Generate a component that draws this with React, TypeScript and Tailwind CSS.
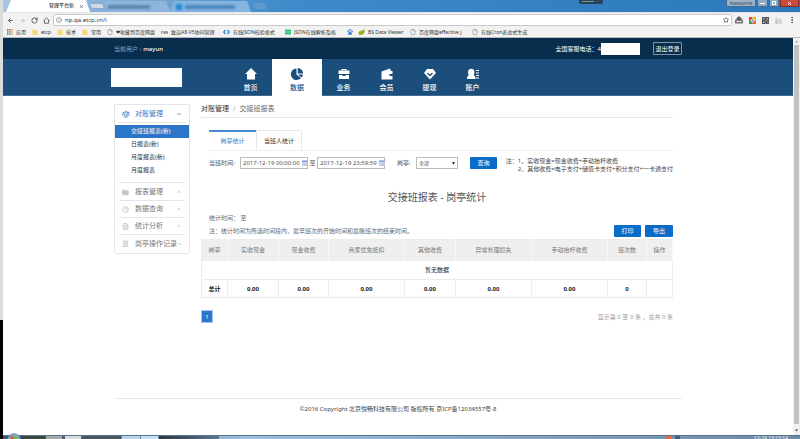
import {
  ArrowLeft,
  ArrowRight,
  ChevronUp,
  File,
  FileText,
  Folder,
  House,
  Info,
  Landmark,
  MoreVertical,
  PieChart,
  RotateCw,
  Scale,
  Star,
  X,
} from "lucide-react";
import type { ReactNode } from "react";

function AppsIcon() {
  const colors = ["#d94a3a", "#d94a3a", "#e8a13c", "#3f9e58", "#4a82d8", "#e8a13c", "#3f9e58", "#4a82d8", "#e8a13c"];
  return (
    <svg viewBox="0 0 12 12" className="size-[6px] shrink-0">
      {colors.map((c, i) => (
        <rect key={i} x={(i % 3) * 4.4} y={Math.floor(i / 3) * 4.4} width="3" height="3" fill={c} />
      ))}
    </svg>
  );
}

const folderMark = (
  <svg viewBox="0 0 12 12" className="size-[6px] shrink-0">
    <path d="M1 1h5v1h5v10H1z" fill="#f7d774" />
  </svg>
);

const pageMark = <File className="size-[6px] shrink-0 text-gray-500" />;

const bookmarks: { icon: ReactNode; text: string; width: string }[] = [
  { icon: <AppsIcon />, text: "应用", width: "w-[25px]" },
  { icon: folderMark, text: "etcp", width: "w-[25px]" },
  { icon: folderMark, text: "技术", width: "w-[25px]" },
  { icon: folderMark, text: "常用", width: "w-[25px]" },
  { icon: pageMark, text: "❤收藏到百度网盘", width: "w-[54px]" },
  {
    icon: (
      <svg viewBox="0 0 14 8" className="h-[4px] w-[7px] shrink-0">
        <path d="M1 7V3h3v4M6 3h3v2H6v2h3M11 3v4h2V3z" fill="none" stroke="#777" strokeWidth="1.5" />
      </svg>
    ),
    text: "致远A8-V5协同管理",
    width: "w-[62px]",
  },
  {
    icon: (
      <svg viewBox="0 0 14 12" className="h-[6px] w-[7px] shrink-0">
        <path d="M5 2 1.500 6 5 10M9 2l3.500 4L9 10" fill="none" stroke="#2d8fd5" strokeWidth="2.600" />
      </svg>
    ),
    text: "在线JSON校验格式",
    width: "w-[62px]",
  },
  {
    icon: (
      <svg viewBox="0 0 12 12" className="size-[6px] shrink-0">
        <rect y="1" width="12" height="10" rx="2" fill="#1fc773" />
        <path d="M1 6h10" stroke="#c9f5df" strokeWidth="1.500" />
      </svg>
    ),
    text: "JSON在线解析及格",
    width: "w-[62px]",
  },
  {
    icon: (
      <svg viewBox="0 0 12 12" className="size-[6px] shrink-0" fill="#3d7be6">
        <circle cx="2" cy="5" r="1.600" />
        <circle cx="4.500" cy="2" r="1.600" />
        <circle cx="8" cy="2" r="1.600" />
        <circle cx="10.300" cy="5" r="1.600" />
        <path d="M6 5c2 0 4 3 4 5s-2 2-4 1.500C4 12 2 12 2 10s2-5 4-5z" />
      </svg>
    ),
    text: "",
    width: "w-[11px]",
  },
  {
    icon: (
      <svg viewBox="0 0 14 12" className="h-[6px] w-[7px] shrink-0">
        <path d="M1 7c1-5 7-2 12-7 1 6-1 12-7 12-4 0-6-2-5-5z" fill="#9db91c" />
        <path d="M2 10c4 0 7-2 9-6" stroke="#6a8210" fill="none" />
      </svg>
    ),
    text: "BS Data Viewer",
    width: "w-[52px]",
  },
  { icon: pageMark, text: "百度网盘effective j", width: "w-[62px]" },
  { icon: pageMark, text: "在线Cron表达式生成", width: "w-[64px]" },
];

function TabStrip() {
  return (
    <div className="relative flex h-[12px] shrink-0 items-end overflow-hidden bg-linear-to-r from-[#a9c6e2] via-[#3f8bca] via-35% to-[#2a78ba] pl-[3px] text-[5px]">
      <div className="flex h-[12px] w-[84px] items-center justify-end gap-[5px] bg-white pr-[6px] text-black [clip-path:polygon(5px_0,80px_0,84px_100%,0_100%)]">
        <span className="whitespace-nowrap">管理平台新</span>
        <button aria-label="关闭" className="text-gray-600">
          <X className="size-[5px]" strokeWidth={3} />
        </button>
      </div>
      <div className="mb-[3px] h-[6px] w-[14px] skew-x-[20deg] rounded-xs border border-[#8fa9c4] bg-[#cfdbe6]" />
      <div className="flex h-[11px] w-[66px] items-center bg-[#8fb6da] [clip-path:polygon(0_0,62px_0,66px_100%,4px_100%)]">
        <div className="ml-[4px] h-[4px] w-[42px] bg-[#5b87b1] blur-[1px]" />
      </div>
      <div className="flex h-[11px] w-[81px] items-center gap-[3px] bg-[#85b5df] pl-[6px] [clip-path:polygon(4px_0,77px_0,81px_100%,0_100%)]">
        <div className="size-[6px] bg-[#2089d4] blur-[1px]" />
        <div className="h-[4px] w-[50px] bg-[#4b87bd] blur-[1px]" />
      </div>
      <div className="mb-[3px] ml-[3px] h-[6px] w-[12px] skew-x-[20deg] rounded-xs bg-[#5f9bcf]" />
      <div className="absolute top-0 left-[576px] h-[4px] w-[24px] rounded-b-xs bg-[#25435f]">
        <div className="mt-px ml-[3px] h-px w-[12px] bg-[#7fa07a]" />
      </div>
      <div className="absolute top-0 right-px flex h-[7px] gap-px text-[5px] leading-[6px] text-white">
        <span className="w-[30px] rounded-b-xs border border-t-0 border-[#47698a] bg-[#9db2c6] text-center text-[#33506d]">Awesome</span>
        <button aria-label="最小化" className="flex w-[11px] items-center justify-center border border-t-0 border-[#47698a] bg-[#8fabc6]">
          <span className="h-px w-[5px] bg-white" />
        </button>
        <button aria-label="还原" className="flex w-[10px] items-center justify-center border border-t-0 border-[#47698a] bg-[#8fabc6]">
          <span className="size-[4px] border border-white" />
        </button>
        <button aria-label="关闭窗口" className="flex w-[19px] items-center justify-center rounded-br-xs border border-t-0 border-[#7b3029] bg-[#cf4a3c]">
          <X className="size-[5px]" strokeWidth={4} />
        </button>
      </div>
    </div>
  );
}

function Toolbar() {
  return (
    <div className="flex h-[15px] shrink-0 items-center border-t border-[#dfe5ea] bg-[#f2f2f2] px-[4px] text-[#555]">
      <div className="flex w-[46px] gap-[5px]">
        <button aria-label="后退"><ArrowLeft className="size-[7px]" strokeWidth={3} /></button>
        <button aria-label="前进" className="text-[#c5c5c5]"><ArrowRight className="size-[7px]" strokeWidth={3} /></button>
        <button aria-label="刷新"><RotateCw className="size-[7px]" strokeWidth={3} /></button>
        <button aria-label="主页">
          <svg viewBox="0 0 14 14" className="size-[7px]">
            <path d="M1 7.500 7 1.500l6 6M3 6.500V12.500h8V6.500" fill="none" stroke="currentColor" strokeWidth="1.700" />
          </svg>
        </button>
      </div>
      <div className="flex h-[12px] flex-1 items-center gap-[3px] rounded-xs border border-[#c9c9c9] bg-white px-[2px]">
        <Info className="size-[6px]" />
        <input aria-label="地址" defaultValue="np.qa.etcp.cn/i" className="min-w-0 flex-1 text-[6px] leading-[8px] text-[#333] outline-none" />
        <button aria-label="收藏"><Star className="size-[6px]" strokeWidth={3} /></button>
      </div>
      <div className="ml-[3px] flex items-center gap-[6px]">
        <svg viewBox="0 0 16 16" className="size-[8px]">
          <path d="M8 0 13 5v3H3V5z" fill="#555" />
          <rect y="7" width="16" height="8" rx="1" fill="#777" />
          <path d="M3 11h10" stroke="#eee" strokeWidth="2" />
        </svg>
        <svg viewBox="0 0 16 16" className="size-[7px]">
          <path d="M0 0h8v8H0z" fill="#e23d30" />
          <path d="M8 0h8v8H8z" fill="#f4c20d" />
          <path d="M0 8h8v8H0z" fill="#2fa24c" />
          <path d="M8 8h8v8H8z" fill="#ec6c3b" />
          <circle cx="8" cy="8" r="4" fill="#fff" />
          <circle cx="8" cy="8" r="2.500" fill="#3b78e7" />
        </svg>
        <svg viewBox="0 0 14 14" className="size-[7px]">
          <path d="M0 0h14v14H0z" fill="#555" />
          <path d="M2 2h3v3H2zM9 2h3v3H9zM2 9h3v3H2zM7 6h2v2H7zM10 9h3v2h-3zM6 11h2v2H6z" fill="#aaa" />
        </svg>
        <svg viewBox="0 0 14 14" className="size-[7px]">
          <path d="M1 1h4v2H1zM1 5h4v9H1zM7 4h6v2H7zM7 7h2v7H7zM11 7h2v7h-2z" fill="#bbb" />
        </svg>
        <button aria-label="菜单" className="text-[#555]"><MoreVertical className="size-[8px]" strokeWidth={3} /></button>
      </div>
    </div>
  );
}

function Bookmarks() {
  return (
    <div className="flex h-[11px] shrink-0 items-center border-b border-[#b9b9b9] bg-[#f2f2f2] pl-[4px] text-[5px] leading-[8px] text-[#333]">
      {bookmarks.map((b, i) => (
        <a key={i} href="#" aria-label={b.text || "百度"} className={`flex shrink-0 items-center gap-[3px] ${b.width}`}>
          {b.icon}
          <span className="whitespace-nowrap">{b.text}</span>
        </a>
      ))}
    </div>
  );
}

const navItems = [
  {
    label: "首页",
    icon: <path d="M12 0 0 12h4v11h16V12h4z" />,
  },
  {
    label: "数据",
    active: true,
    icon: (
      <>
        <path d="M11 1A11.500 11.500 0 1 0 20 20L11 13z" />
        <path d="M13.500 0A10.500 10.500 0 0 1 24 11H13.500z" />
        <path d="M14 13h10a11 11 0 0 1-3 6z" />
      </>
    ),
  },
  {
    label: "业务",
    icon: (
      <>
        <path d="M7 5V2h10v3h-2V4H9v1zM1 5h22v7H1z" />
        <path d="M2 14h7v2h6v-2h7v8H2z" />
      </>
    ),
  },
  {
    label: "会员",
    icon: <path fillRule="evenodd" d="M1 7 18 1l2 5h3v17H1zM17 12v4h6v-4z" />,
  },
  {
    label: "提现",
    icon: (
      <>
        <path d="M6 2h12l6 8-12 13L0 10z" />
        <path d="m7 10 5 5 5-5" fill="none" stroke="#1b4e7b" strokeWidth="2.500" />
      </>
    ),
  },
  {
    label: "账户",
    icon: (
      <>
        <path d="M2 8c0-9 13-9 13 0 0 3-1 5-2 6 3 1 4 4 4 8H0c0-4 1-7 4-8-1-1-2-3-2-6z" />
        <path d="M18 4h6v2h-6zM18 9h6v2h-6zM18 14h6v2h-6zM18 19h6v2h-6z" />
      </>
    ),
  },
];

function Header() {
  return (
    <header className="shrink-0 text-white">
      <div className="bg-[#082d4d]">
        <div className="mx-auto flex h-[21px] max-w-[568px] items-center text-[6px] leading-[8px]">
          <span className="text-[#8fa3b5]">当前用户 : </span>
          <span className="ml-[2px] font-medium">mayun</span>
          <span className="ml-auto">全国客服电话：4</span>
          <span className="h-[12px] w-[39px] bg-white" />
          <button className="ml-[13px] h-[13px] w-[29px] rounded-[1px] border border-[#8496a7]">退出登录</button>
        </div>
      </div>
      <div className="border-b border-[#3f6c93] bg-[#1b4e7b]">
        <div className="mx-auto flex h-[36px] max-w-[574px] items-center">
          <div className="h-[19px] w-[71px] bg-white" />
          <nav className="ml-[47px] flex h-full">
            {navItems.map((item) => (
              <a
                key={item.label}
                href="#"
                className={`flex flex-col items-center gap-[3px] pt-[9px] text-[7px] leading-[9px] font-medium ${
                  item.active ? "h-[37px] w-[50px] bg-white text-[#1b4e7b]" : "h-full w-[43px]"
                }`}
              >
                <svg viewBox="0 0 24 24" fill="currentColor" className="size-[12px]">
                  {item.icon}
                </svg>
                {item.label}
              </a>
            ))}
          </nav>
        </div>
      </div>
    </header>
  );
}

const subMenu = ["交接班报表(新)", "日报表(新)", "月度报表(新)", "月度报表"];

const menuGroups = [
  { label: "报表管理", icon: <Folder className="size-[7px] fill-current" /> },
  { label: "数据查询", icon: <PieChart className="size-[7px]" strokeWidth={3} /> },
  { label: "统计分析", icon: <FileText className="size-[7px]" strokeWidth={3} /> },
  { label: "岗亭操作记录", icon: <Landmark className="size-[7px]" strokeWidth={3} /> },
];

function Sidebar() {
  return (
    <aside className="w-[76px] shrink-0 self-start rounded-xs border border-[#e4e4e4] pb-px text-[7px] leading-[10px]">
      <button className="mx-[4px] flex h-[18px] w-[66px] items-center border-b border-[#e6e6e6] pt-px pl-[3px] text-[#3a78c3]">
        <Scale className="size-[8px]" strokeWidth={2} />
        <span className="ml-[5px]">对账管理</span>
        <ChevronUp className="mr-[3px] ml-auto size-[6px]" strokeWidth={3} />
      </button>
      <ul className="mt-[2px] mb-[5px] text-[6px] leading-[13px] text-[#333]">
        {subMenu.map((text, i) => (
          <li key={text}>
            <a href="#" className={`block h-[13px] pl-[16px] ${i === 0 ? "bg-[#2b76c8] text-white" : ""}`}>
              {text}
            </a>
          </li>
        ))}
      </ul>
      <div className="mx-[4px] border-t border-[#e6e6e6] pt-px text-[#777]">
        {menuGroups.map((g) => (
          <button key={g.label} className="flex h-[17px] w-full items-center border-b border-[#e6e6e6] pl-[3px] last:border-b-0">
            <span className="text-[#c4c4c4]">{g.icon}</span>
            <span className="ml-[6px] whitespace-nowrap">{g.label}</span>
            <ChevronUp className="mr-[3px] ml-auto size-[6px] shrink-0 text-[#bbb]" strokeWidth={3} />
          </button>
        ))}
      </div>
    </aside>
  );
}

function DateField({ id, value }: { id: string; value: string }) {
  return (
    <span className="flex h-[12px] w-[68px] items-center border border-[#bbb] pr-px pl-[2px]">
      <input id={id} defaultValue={value} className="w-[59px] text-[6px] leading-[8px] text-[#555] outline-none" />
      <svg viewBox="0 0 12 12" className="size-[6px] shrink-0">
        <path d="M0 1h12v11H0z" fill="#b9c8e4" />
        <path d="M0 1h12v3H0z" fill="#86a5da" />
        <path d="M2 6h3M2 9h3M6 6h3" stroke="#fff" />
        <path d="M7 7h4v4H7z" fill="#e7b7a4" />
      </svg>
    </span>
  );
}

function Filters() {
  return (
    <form className="mt-[6px] flex items-start pl-[8px] text-[6px] leading-[12px] text-[#555]" onSubmit={(e) => e.preventDefault()}>
      <label htmlFor="from" className="w-[31px]">当班时间:</label>
      <DateField id="from" value="2017-12-19 00:00:00" />
      <label htmlFor="to" className="mx-[1px] w-[7px] text-center">至</label>
      <DateField id="to" value="2017-12-19 23:59:59" />
      <label htmlFor="booth" className="ml-[12px] w-[19px]">岗亭:</label>
      <span className="relative">
        <select id="booth" className="block h-[12px] w-[42px] appearance-none border border-[#bbb] bg-white pl-[2px] text-[5px] leading-[8px]">
          <option>全部</option>
        </select>
        <svg viewBox="0 0 6 6" className="pointer-events-none absolute top-[5px] right-[3px] size-[3px]">
          <path d="M0 0h6L3 6z" fill="#333" />
        </svg>
      </span>
      <button className="ml-[12px] h-[12px] w-[27px] rounded-[1px] bg-[#0b6cc8] text-white">查询</button>
      <div className="ml-auto flex leading-[8px] whitespace-nowrap text-[#444]">
        <span>注：</span>
        <ol>
          <li>1、实收现金=现金收费+手动抬杆收费</li>
          <li>2、其他收费=电子支付+储值卡支付+积分支付+一卡通支付</li>
        </ol>
      </div>
    </form>
  );
}

const columns = [
  { name: "岗亭", width: "w-[26px]", total: "总计" },
  { name: "实收现金", width: "w-[51px]", total: "0.00" },
  { name: "现金收费", width: "w-[50px]", total: "0.00" },
  { name: "商家优免抵扣", width: "w-[76px]", total: "0.00" },
  { name: "其他收费", width: "w-[51px]", total: "0.00" },
  { name: "异常处理损失", width: "w-[76px]", total: "0.00" },
  { name: "手动抬杆收费", width: "w-[76px]", total: "0.00" },
  { name: "班次数", width: "w-[39px]", total: "0" },
  { name: "操作", width: "w-[26px]", total: "" },
];

function ReportTable() {
  return (
    <table className="mt-[2px] w-full table-fixed border-collapse border border-[#ececec] text-center text-[6px] leading-[8px] text-[#222]">
      <thead className="bg-[#efefef] text-[#777]">
        <tr className="h-[21px]">
          {columns.map((c) => (
            <th key={c.name} className={`border-r border-[#f9f9f9] font-normal ${c.width}`}>{c.name}</th>
          ))}
        </tr>
      </thead>
      <tbody>
        <tr className="h-[19px]">
          <td colSpan={9}>暂无数据</td>
        </tr>
        <tr className="h-[18px] border-t border-[#ececec] font-bold">
          {columns.map((c) => (
            <td key={c.name} className="border-r border-[#ececec]">{c.total}</td>
          ))}
        </tr>
      </tbody>
    </table>
  );
}

function Report() {
  return (
    <main className="mr-[9px] ml-[11px] min-w-0 flex-1 text-[6px] leading-[8px] text-[#666]">
      <div className="flex h-[14px] items-center gap-[4px] border-b border-[#e8e8e8] pb-[4px] text-[7px]">
        <a href="#" className="text-[#333]">对账管理</a>
        <span className="text-[#aaa]">/</span>
        <span>交接班报表</span>
      </div>
      <div className="mt-[12px] ml-[8px] flex h-[21px] border-b border-[#eee]">
        <button className="w-[47px] border-t-2 border-[#4a8cd4] text-[#3a7cc6]">岗亭统计</button>
        <button className="w-[46px] border-t border-r border-l border-[#e8e8e8] text-[#333]">当班人统计</button>
      </div>
      <Filters />
      <h1 className="mt-[17px] text-center text-[10px] leading-[14px] text-[#555]">交接班报表 - 岗亭统计</h1>
      <p className="mt-[10px] ml-[8px]">统计时间： 至</p>
      <div className="mt-[3px] ml-[8px] flex items-center">
        <p>注：统计时间为所选时间段内，最早班次的开始时间和最晚班次的结束时间。</p>
        <button className="ml-auto h-[12px] w-[27px] rounded-[1px] bg-[#0b6cc8] text-white">打印</button>
        <button className="ml-[4px] h-[12px] w-[28px] rounded-[1px] bg-[#0b6cc8] text-white">导出</button>
      </div>
      <ReportTable />
      <div className="mt-[12px] flex items-center justify-between text-[#999]">
        <button className="h-[13px] w-[12px] border border-[#a5cdf2] bg-[#2b76c8] leading-[8px] text-white">1</button>
        <span>显示第 0 至 0 条 ，总共 0 条</span>
      </div>
    </main>
  );
}

function Scrollbar() {
  return (
    <div className="flex w-[7px] shrink-0 flex-col items-center bg-[#f1f1f1]">
      <svg viewBox="0 0 6 6" className="my-[2px] size-[3px]"><path d="M0 5h6L3 1z" fill="#999" /></svg>
      <div className="w-[5px] flex-1 bg-[#c1c1c1]" />
      <svg viewBox="0 0 6 6" className="mt-[5px] mb-[3px] size-[3px]"><path d="M0 1h6L3 5z" fill="#444" /></svg>
    </div>
  );
}

function Taskbar() {
  return (
    <div className="relative h-[4px] shrink-0 border-t border-[#5c7288] bg-linear-to-r from-[#40566b] from-5% via-[#9fc1e0] via-30% to-[#6c8aa6]">
      <div className="absolute top-0 left-[18px] flex h-[3px] gap-px overflow-hidden">
        <span className="w-[24px] bg-[#3c4840]" />
        <span className="w-[16px] bg-[#a9a9a9]" />
        <span className="ml-[2px] w-[16px] bg-[#dcdcdc]" />
        <span className="w-[39px] bg-[#4b565f]" />
        <span className="w-[18px] bg-[#bfd6ea]" />
        <span className="w-[17px] bg-[#c9e0f4]" />
        <span className="w-[60px] bg-linear-to-r from-[#303840] to-[#5c7892]" />
      </div>
      <svg viewBox="0 0 28 12" className="absolute -top-[3px] left-[4px] h-[6px] w-[14px]">
        <circle cx="14" cy="14" r="13" fill="#7fa9cc" stroke="#4d7ca5" />
        <path d="M7 7c2-2 4-1 6 0v5H7z" fill="#e2562f" />
        <path d="M14 7c2 1 4 1 6 0v5h-6z" fill="#83b93a" />
      </svg>
      <div className="absolute top-0 right-[12px] flex h-[3px] items-start gap-[4px] overflow-hidden text-[5px] leading-[5px] text-white">
        <span className="h-[3px] w-[5px] bg-[#e06a3c]" />
        <span className="mr-[70px] h-[3px] w-[5px] bg-[#4c5f72]" />
        <span>12-19 13:13:14</span>
      </div>
    </div>
  );
}

export default function App() {
  return (
    <div className="flex h-screen overflow-hidden bg-black font-['Noto_Sans','Noto_Sans_CJK_SC',sans-serif]">
      <div className="w-[3px] shrink-0">
        <div className="h-[73%] bg-[#dcdcda]" />
      </div>
      <div className="flex min-w-0 flex-1 flex-col bg-white">
        <TabStrip />
        <Toolbar />
        <Bookmarks />
        <div className="flex min-h-0 flex-1">
          <div className="flex min-w-0 flex-1 flex-col">
            <Header />
            <div className="mx-auto flex w-full max-w-[568px] flex-1 flex-col pt-[8px]">
              <div className="flex flex-1">
                <Sidebar />
                <Report />
              </div>
              <footer className="mb-[21px] border-t border-[#e8e8e8] pt-[6px] text-center text-[6px] leading-[9px] text-[#444]">
                ©2016 Copyright 北京悦畅科技有限公司 版权所有 京ICP备12034557号-8
              </footer>
            </div>
          </div>
          <Scrollbar />
        </div>
        <Taskbar />
      </div>
    </div>
  );
}
